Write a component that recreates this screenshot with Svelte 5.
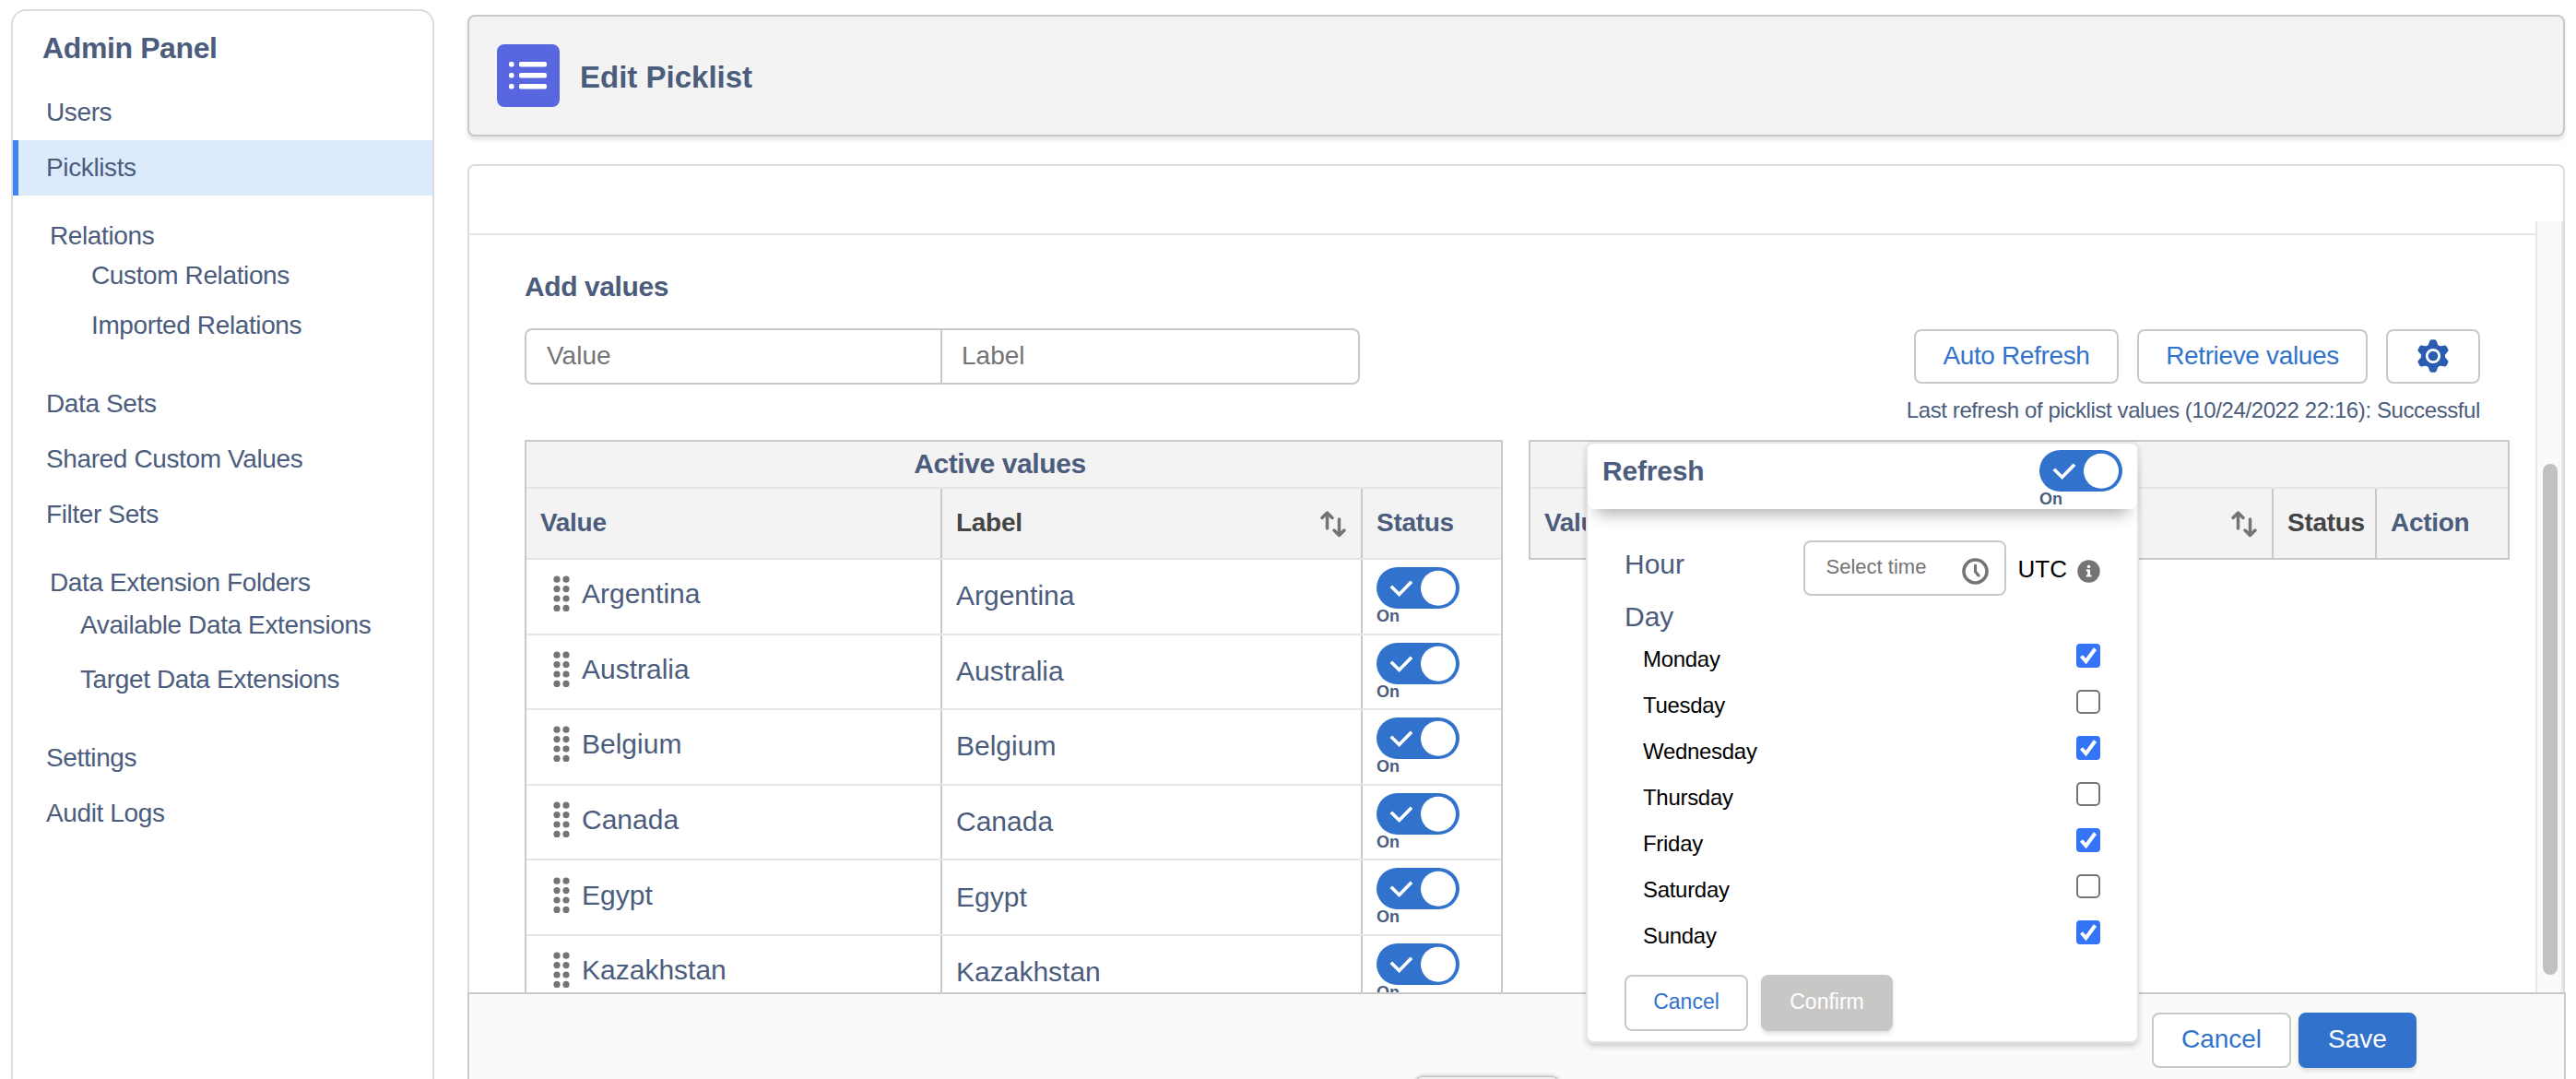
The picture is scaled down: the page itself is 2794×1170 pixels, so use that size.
<script>
  const nav = [
    { label: "Users" },
    { label: "Picklists" },
    { label: "Relations", kind: "relations", children: ["Custom Relations", "Imported Relations"] },
    { label: "Data Sets" },
    { label: "Shared Custom Values" },
    { label: "Filter Sets" },
    {
      label: "Data Extension Folders",
      kind: "folders",
      children: ["Available Data Extensions", "Target Data Extensions"]
    },
    { label: "Settings" },
    { label: "Audit Logs" }
  ];

  const countries = ["Argentina", "Australia", "Belgium", "Canada", "Egypt", "Kazakhstan"];

  let activePage = "Picklists";
  let newValue = "";
  let newLabel = "";
  let time = "";
  let days = [
    { name: "Monday", checked: true },
    { name: "Tuesday", checked: false },
    { name: "Wednesday", checked: true },
    { name: "Thursday", checked: false },
    { name: "Friday", checked: true },
    { name: "Saturday", checked: false },
    { name: "Sunday", checked: true }
  ];

  function toggleDay(day) {
    day.checked = !day.checked;
    days = days;
  }
</script>

{#snippet toggle()}
  <div class="toggle">
    <svg width="90" height="45" viewBox="0 0 90 45">
      <rect width="90" height="45" rx="22.5" fill="#3173cc" />
      <path d="M15.800 20.800l8.800 8.700L38 15.800" fill="none" stroke="#fff" stroke-width="3.700" />
      <circle cx="67" cy="22.700" r="19" fill="#fff" />
    </svg>
    <span>On</span>
  </div>
{/snippet}

{#snippet sortIcon()}
  <svg class="sort" width="30" height="30" viewBox="0 0 30 30" fill="none" stroke="#747474" stroke-width="3.500" stroke-linecap="round" stroke-linejoin="round">
    <path d="M8.500 20V4M3 8.500l5.500-5.500l5.500 5.500" />
    <path d="M21.500 10v16M16 22l5.500 5.500l5.500-5.500" />
  </svg>
{/snippet}

<div class="page">
  <aside class="sidebar">
    <h1>Admin Panel</h1>
    <nav>
      {#each nav as item (item.label)}
        {#if item.children}
          <div class="group {item.kind}">
            <p class="group-title">{item.label}</p>
            {#each item.children as child}
              <button class="sub-item" type="button">{child}</button>
            {/each}
          </div>
        {:else}
          <button
            class="nav-item"
            class:active={item.label === activePage}
            type="button"
            on:click={() => (activePage = item.label)}
          >
            {item.label}
          </button>
        {/if}
      {/each}
    </nav>
  </aside>

  <main>
    <header class="page-header">
      <div class="page-icon">
        <svg width="44" height="36" viewBox="0 0 44 36" fill="#fff">
          {#each [3, 15, 27] as y}
            <rect x="1" {y} width="5.500" height="5.500" rx="2" />
            <rect x="12" {y} width="30" height="5.500" rx="2" />
          {/each}
        </svg>
      </div>
      <h2>Edit Picklist</h2>
    </header>

    <section class="card">
      <div class="scroll-area">
        <div class="content">
          <div class="spacer"></div>
          <h3>Add values</h3>
          <div class="tools">
            <div class="inputs">
              <input type="text" placeholder="Value" bind:value={newValue} />
              <input type="text" placeholder="Label" bind:value={newLabel} />
            </div>
            <div class="actions">
              <div class="buttons">
                <button class="btn auto" type="button">Auto Refresh</button>
                <button class="btn retrieve" type="button">Retrieve values</button>
                <button class="btn gear" type="button" aria-label="Settings">
                  <svg width="34" height="36" viewBox="-17 -18 34 36" fill="#2a5db0">
                    <circle r="13" />
                    {#each [0, 60, 120, 180, 240, 300] as angle}
                      <path d="M-6-10L-4-15.500Q-3.500-17.800-1.500-17.800H1.500Q3.500-17.800 4-15.500L6-10z" transform="rotate({angle})" />
                    {/each}
                    <circle r="6.700" stroke="#fff" stroke-width="2.800" />
                  </svg>
                </button>
              </div>
              <p class="last-refresh">Last refresh of picklist values (10/24/2022 22:16): Successful</p>
            </div>
          </div>

          <div class="tables">
            <div class="table active-values">
              <div class="caption">Active values</div>
              <div class="row head">
                <div>Value</div>
                <div class="dark">Label {@render sortIcon()}</div>
                <div>Status</div>
              </div>
              {#each countries as country (country)}
                <div class="row">
                  <div class="value">
                    <svg width="18" height="40" viewBox="0 0 18 40" fill="#747474">
                      {#each [4.2, 14.6, 25, 35.4] as y}
                        <circle cx="4" cy={y} r="3.600" />
                        <circle cx="14" cy={y} r="3.600" />
                      {/each}
                    </svg>
                    <span>{country}</span>
                  </div>
                  <div class="label">{country}</div>
                  <div class="status">{@render toggle()}</div>
                </div>
              {/each}
            </div>

            <div class="table inactive-values">
              <div class="caption"></div>
              <div class="row head">
                <div>Value</div>
                <div>{@render sortIcon()}</div>
                <div class="dark">Status</div>
                <div>Action</div>
              </div>
            </div>
          </div>
        </div>
        <div class="scrollbar"><div class="thumb"></div></div>
      </div>

      <footer>
        <button class="btn cancel" type="button">Cancel</button>
        <button class="btn save" type="button">Save</button>
        <div class="drawer-tab"></div>
      </footer>
    </section>
  </main>

  <div class="popover">
    <div class="popover-head">
      <h3>Refresh</h3>
      {@render toggle()}
    </div>
    <div class="popover-body">
      <div class="hour">
        <span class="field-label">Hour</span>
        <div class="time">
          <input type="text" placeholder="Select time" bind:value={time} />
          <svg width="29" height="29" viewBox="0 0 29 29" fill="none" stroke="#747474">
            <circle cx="14.500" cy="14.500" r="12.500" stroke-width="3.600" />
            <path d="M14.500 8v7l3.500 4" stroke-width="3.200" stroke-linecap="round" />
          </svg>
        </div>
        <span class="utc">UTC</span>
        <svg class="info" width="25" height="25" viewBox="0 0 25 25">
          <circle cx="12.500" cy="12.500" r="12.200" fill="#747474" />
          <circle cx="12.500" cy="7.500" r="1.800" fill="#fff" />
          <path d="M9.800 10.500H14V16.500H15.500V18.500H9.800V16.500H11.200V12.500H9.800z" fill="#fff" />
        </svg>
      </div>
      <p class="field-label day-title">Day</p>
      {#each days as day (day.name)}
        <div class="day">
          <span>{day.name}</span>
          <button
            class="check"
            class:checked={day.checked}
            type="button"
            role="checkbox"
            aria-checked={day.checked}
            aria-label={day.name}
            on:click={() => toggleDay(day)}
          >
            {#if day.checked}
              <svg width="26" height="26" viewBox="0 0 26 26">
                <path d="M5.500 13.500l5 5.500L20.500 5.500" fill="none" stroke="#fff" stroke-width="4" />
              </svg>
            {/if}
          </button>
        </div>
      {/each}
      <div class="popover-actions">
        <button class="btn small-cancel" type="button">Cancel</button>
        <button class="btn confirm" type="button" disabled>Confirm</button>
      </div>
    </div>
  </div>
</div>

<style>
  :global(body) {
    margin: 0;
    background: #fff;
  }

  .page {
    position: relative;
    box-sizing: border-box;
    width: 2794px;
    height: 1170px;
    overflow: hidden;
    display: flex;
    align-items: flex-start;
    gap: 36px;
    padding: 10px 12px 0;
    font-family: "Liberation Sans", Arial, sans-serif;
    font-size: 28px;
    color: #4b5c7c;
  }

  .page :global(*) {
    box-sizing: border-box;
  }

  h1,
  h2,
  h3,
  p {
    margin: 0;
  }

  button,
  input {
    font: inherit;
    color: inherit;
    letter-spacing: inherit;
    margin: 0;
  }

  svg {
    display: block;
    flex: none;
  }

  .sidebar {
    width: 459px;
    height: 1300px;
    flex: none;
    border: 2px solid #dcdcdc;
    border-radius: 16px;
    letter-spacing: -0.38px;
  }

  h1 {
    padding-left: 32px;
    font-size: 32px;
    line-height: 80px;
  }

  nav button {
    display: block;
    width: 100%;
    border: 0;
    background: transparent;
    text-align: left;
    cursor: pointer;
  }

  .nav-item {
    height: 60px;
    padding: 0 0 0 36px;
    line-height: 60px;
  }

  .nav-item.active {
    padding-left: 30px;
    border-left: 6px solid #3f86ec;
    background: #dcebfc;
  }

  .group {
    height: 196px;
    padding-top: 28px;
  }

  .group-title {
    padding-left: 40px;
    line-height: 32px;
  }

  .sub-item {
    padding: 0 0 0 85px;
    line-height: 54px;
  }

  .group.folders {
    height: 204px;
  }

  .folders .sub-item {
    padding-left: 73px;
    line-height: 59px;
  }

  main {
    flex: 1;
    min-width: 0;
    padding-top: 6px;
  }

  .page-header {
    display: flex;
    align-items: center;
    gap: 22px;
    width: 2275px;
    height: 132px;
    padding-left: 30px;
    border: 2px solid #c9c9c9;
    border-radius: 8px;
    background: #f3f3f3;
    box-shadow: 0 4px 4px rgba(0, 0, 0, 0.1);
  }

  .page-icon {
    width: 68px;
    height: 68px;
    display: grid;
    place-items: center;
    border-radius: 8px;
    background: #5867e0;
  }

  h2 {
    font-size: 33px;
    line-height: 40px;
    padding-top: 4px;
  }

  .card {
    margin-top: 30px;
    width: 2276px;
  }

  .scroll-area {
    display: flex;
    align-items: flex-end;
    width: 2275px;
    height: 898px;
    border: 2px solid #dcdcdc;
    border-bottom: 0;
    border-radius: 8px 8px 0 0;
  }

  .content {
    width: 2241px;
    height: 896px;
    overflow: hidden;
  }

  .spacer {
    height: 75px;
    border-bottom: 2px solid #e5e5e5;
  }

  h3 {
    font-size: 30px;
    line-height: 40px;
  }

  .content h3 {
    padding: 36px 0 0 60px;
    letter-spacing: -0.4px;
  }

  .tools {
    display: flex;
    justify-content: space-between;
    margin-top: 25px;
    padding: 0 60px 0 60px;
  }

  .inputs {
    width: 906px;
    height: 61px;
    display: grid;
    grid-template-columns: 449px 1fr;
    border: 2px solid #c9c9c9;
    border-radius: 8px;
  }

  .inputs input {
    min-width: 0;
    border: 0;
    padding: 0 22px 2px;
    background: transparent;
    outline: none;
  }

  .inputs input + input {
    border-left: 2px solid #c9c9c9;
    padding-left: 21px;
  }

  input::placeholder {
    color: #747474;
    opacity: 1;
  }

  .actions {
    letter-spacing: -0.35px;
  }

  .buttons {
    display: flex;
    justify-content: flex-end;
    gap: 20px;
    padding-top: 1px;
  }

  .btn {
    height: 59px;
    display: flex;
    align-items: center;
    justify-content: center;
    padding: 0 0 2px;
    border: 2px solid #c9c9c9;
    border-radius: 8px;
    background: #fff;
    color: #3173cc;
    cursor: pointer;
  }

  .btn.auto {
    width: 222px;
  }

  .btn.retrieve {
    width: 250px;
  }

  .btn.gear {
    width: 102px;
  }

  .last-refresh {
    margin-top: 12px;
    font-size: 24px;
    line-height: 34px;
    text-align: right;
    letter-spacing: -0.4px;
  }

  .tables {
    display: flex;
    gap: 28px;
    margin-top: 15px;
    padding-left: 60px;
  }

  .table {
    flex: none;
    border: 2px solid #c9c9c9;
  }

  .active-values {
    width: 1061px;
  }

  .inactive-values {
    width: 1064px;
    height: 130px;
  }

  .caption {
    height: 51px;
    padding-right: 30px;
    border-bottom: 2px solid #e5e5e5;
    background: #f3f3f3;
    font-size: 30px;
    font-weight: 700;
    line-height: 47px;
    text-align: center;
    letter-spacing: -0.4px;
  }

  .row {
    display: grid;
    grid-template-columns: 449px 456px 1fr;
    height: 81.6px;
    border-bottom: 2px solid #e5e5e5;
    font-size: 30px;
  }

  .row > div {
    display: flex;
    align-items: center;
    padding-left: 15px;
  }

  .row > div + div {
    border-left: 2px solid #c9c9c9;
  }

  .row.head {
    height: 77px;
    background: #f3f3f3;
    font-size: 28px;
    font-weight: 700;
  }

  .row.head > div {
    padding-bottom: 2px;
    letter-spacing: -0.3px;
  }

  .inactive-values .row.head {
    height: 75px;
    grid-template-columns: 449px 355px 112px 1fr;
    border-bottom: 0;
  }

  .row .dark {
    color: #444;
  }

  .sort {
    margin: 2px 15px 0 auto;
  }

  .row .label {
    padding-bottom: 1px;
  }

  .row .value {
    gap: 13px;
    padding: 0 0 5px 29px;
  }

  .row .status {
    align-items: flex-start;
    padding-top: 8px;
  }

  .toggle {
    width: 90px;
    font-size: 18px;
    font-weight: 700;
    line-height: 17px;
  }

  .scrollbar {
    width: 30px;
    height: 836px;
    padding: 263px 0 0 6px;
    border-left: 2px solid #e8e8e8;
    border-right: 2px solid #e8e8e8;
    background: #fafafa;
  }

  .thumb {
    width: 16px;
    height: 554px;
    border-radius: 8px;
    background: #c1c1c1;
  }

  footer {
    position: relative;
    display: flex;
    justify-content: flex-end;
    gap: 8px;
    height: 140px;
    padding: 20px 160px 0 0;
    border: 2px solid #c9c9c9;
    background: #fafaf9;
  }

  .btn.cancel {
    width: 151px;
    height: 60px;
  }

  .btn.save {
    width: 128px;
    height: 60px;
    border-color: #3173cc;
    background: #3173cc;
    color: #fff;
    box-shadow: 0 3px 4px rgba(0, 0, 0, 0.12);
  }

  .drawer-tab {
    position: absolute;
    left: 1026px;
    top: 89px;
    width: 156px;
    height: 30px;
    border: 1px solid #c4c4c4;
    border-radius: 8px;
    background: #f0f0f0;
    box-shadow: 0 0 4px rgba(0, 0, 0, 0.3);
  }

  .popover {
    position: absolute;
    left: 1720px;
    top: 479px;
    width: 600px;
    height: 652px;
    border: 2px solid #e5e5e5;
    border-radius: 8px;
    background: #fff;
    box-shadow: 0 4px 6px rgba(0, 0, 0, 0.16);
  }

  .popover-head {
    display: flex;
    justify-content: space-between;
    height: 71px;
    padding: 7px 16px 0 16px;
    border-radius: 8px;
    box-shadow: 0 15px 16px -10px rgba(0, 0, 0, 0.32);
  }

  .popover-head h3 {
    padding-top: 3px;
    letter-spacing: -0.2px;
  }

  .popover-body {
    padding: 34px 40px 0;
  }

  .hour {
    display: flex;
    align-items: flex-start;
    height: 66px;
  }

  .field-label {
    font-size: 30px;
    line-height: 51px;
  }

  .hour .field-label {
    width: 194px;
  }

  .time {
    width: 220px;
    height: 60px;
    display: flex;
    align-items: center;
    padding: 0 17px 0 23px;
    border: 2px solid #c9c9c9;
    border-radius: 8px;
  }

  .time input {
    flex: 1;
    min-width: 0;
    padding: 0 0 2px;
    border: 0;
    outline: none;
    font-size: 22px;
  }

  .time svg {
    margin-top: 6px;
  }

  .utc {
    margin-left: 13px;
    color: #000;
    font-size: 26px;
    line-height: 62px;
  }

  .info {
    margin: 21px 0 0 11px;
  }

  .day-title {
    margin-bottom: 14px;
    line-height: 34px;
  }

  .day {
    display: flex;
    justify-content: space-between;
    height: 50px;
    padding: 0 0 0 20px;
    color: #000;
    font-size: 24px;
    line-height: 30px;
    letter-spacing: -0.3px;
  }

  .check {
    width: 26px;
    height: 26px;
    margin-top: -2px;
    padding: 0;
    border: 2px solid #767676;
    border-radius: 5px;
    background: #fff;
  }

  .check.checked {
    border: 0;
    border-radius: 4px;
    background: #3574f6;
  }

  .popover-actions {
    display: flex;
    gap: 14px;
    margin-top: 7px;
    font-size: 23px;
  }

  .popover-actions .btn {
    height: 61px;
    padding-bottom: 3px;
  }

  .btn.small-cancel {
    width: 134px;
  }

  .btn.confirm {
    width: 143px;
    border: 0;
    background: #c9c7c5;
    color: #fff;
    box-shadow: 0 3px 4px rgba(0, 0, 0, 0.12);
  }
</style>
